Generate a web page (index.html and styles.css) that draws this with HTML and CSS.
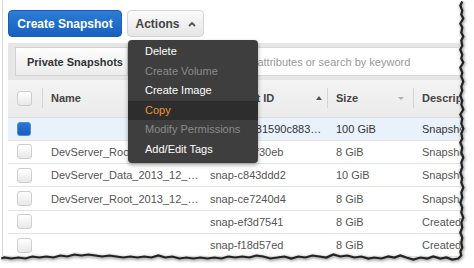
FILE: index.html
```html
<html>
    <head>
        <title>Snapshots</title>
        <link rel="stylesheet" href="styles.css">
    </head>

    <body>
        <div class="screen">
            <div class="toolbar">
                <button class="btn btn-primary">Create Snapshot</button>
                <button class="btn btn-actions">
                    <span>Actions</span>
                    <svg class="caret" width="8" height="6" viewBox="0 0 8 6"><path d="M1 5 L4 2 L7 5" fill="none" stroke="#555" stroke-width="1.8"/></svg>
                </button>
            </div>

            <div class="panel">
                <div class="filter">
                    <div class="filter-type">Private Snapshots</div>
                    <div class="filter-search">
                        <svg class="search-icon" width="12" height="12" viewBox="0 0 12 12"><circle cx="5" cy="5" r="3.5" fill="none" stroke="#999" stroke-width="1.4"/><path d="M7.5 7.5 L11 11" stroke="#999" stroke-width="1.6"/></svg>
                        <span>Filter by tags and attributes or search by keyword</span>
                    </div>
                </div>

                <table class="grid">
                    <colgroup>
                        <col class="w-check">
                        <col class="w-name">
                        <col class="w-id">
                        <col class="w-size">
                        <col class="w-desc">
                    </colgroup>
                    <thead>
                        <tr>
                            <th class="first"><span class="check"></span></th>
                            <th><div class="th-inner"><span>Name</span></div></th>
                            <th><div class="th-inner th-id"><span>Snapshot ID</span><span class="sort-up"></span></div></th>
                            <th><div class="th-inner th-size"><span>Size</span><span class="sort-down"></span></div></th>
                            <th><div class="th-inner"><span>Description</span></div></th>
                        </tr>
                    </thead>
                    <tbody>
                        <tr class="selected">
                            <td><span class="check checked"></span></td>
                            <td class="name"></td>
                            <td class="id">snap-0d331590c883a2b4f</td>
                            <td>100 GiB</td>
                            <td class="desc">Snapshot of DevServer</td>
                        </tr>
                        <tr>
                            <td><span class="check"></span></td>
                            <td class="name">DevServer_Root_2013_12_18</td>
                            <td class="id">snap-d4af30eb</td>
                            <td>8 GiB</td>
                            <td class="desc">Snapshot of DevServer</td>
                        </tr>
                        <tr>
                            <td><span class="check"></span></td>
                            <td class="name">DevServer_Data_2013_12_18</td>
                            <td class="id">snap-c843ddd2</td>
                            <td>10 GiB</td>
                            <td class="desc">Snapshot of DevServer</td>
                        </tr>
                        <tr>
                            <td><span class="check"></span></td>
                            <td class="name">DevServer_Root_2013_12_17</td>
                            <td class="id">snap-ce7240d4</td>
                            <td>8 GiB</td>
                            <td class="desc">Snapshot of DevServer</td>
                        </tr>
                        <tr>
                            <td><span class="check"></span></td>
                            <td class="name"></td>
                            <td class="id">snap-ef3d7541</td>
                            <td>8 GiB</td>
                            <td class="desc">Created by CreateImage</td>
                        </tr>
                        <tr>
                            <td><span class="check"></span></td>
                            <td class="name"></td>
                            <td class="id">snap-f18d57ed</td>
                            <td>8 GiB</td>
                            <td class="desc">Created by CreateImage</td>
                        </tr>
                    </tbody>
                </table>
            </div>
        </div>

        <ul class="menu">
            <li>Delete</li>
            <li class="disabled">Create Volume</li>
            <li>Create Image</li>
            <li class="active">Copy</li>
            <li class="disabled">Modify Permissions</li>
            <li>Add/Edit Tags</li>
        </ul>

        <svg class="tear" width="474" height="268" viewBox="0 0 474 268">
            <defs>
                <filter id="soft" x="-5%" y="-5%" width="110%" height="110%">
                    <feGaussianBlur stdDeviation="0.7"/>
                </filter>
                <filter id="wide" x="-5%" y="-5%" width="110%" height="110%">
                    <feGaussianBlur stdDeviation="1.4"/>
                </filter>
            </defs>
            <path fill="#fff" d="M474,0 L461,0 L459,4 L461,9 L460,13 L462,17 L459,22 L461,26 L460,31 L462,35 L460,39 L461,44 L459,48 L461,53 L460,57 L462,61 L459,66 L461,71 L460,75 L462,80 L460,85 L461,89 L459,94 L461,99 L460,103 L462,108 L459,113 L461,117 L460,122 L462,127 L460,132 L461,137 L459,141 L461,146 L460,151 L462,156 L460,161 L461,166 L459,171 L461,176 L460,181 L462,186 L460,191 L461,196 L459,201 L461,206 L460,211 L462,216 L460,221 L461,226 L459,231 L461,236 L460,241 L461,246 L459,250 L460,254 L457,257 L451,258 L445,256 L439,257 L432,255 L426,257 L419,256 L412,258 L405,256 L399,254 L393,256 L387,255 L380,257 L373,256 L367,257 L360,255 L353,256 L346,254 L339,255 L332,253 L325,256 L318,255 L311,254 L304,256 L297,255 L290,257 L283,255 L276,256 L269,257 L262,255 L255,254 L248,256 L241,255 L234,256 L227,255 L220,257 L213,256 L206,257 L199,256 L192,257 L185,256 L178,257 L171,255 L164,256 L157,254 L150,256 L143,255 L136,256 L129,255 L122,256 L115,255 L108,254 L101,255 L94,254 L87,253 L80,254 L73,253 L66,255 L59,254 L52,256 L45,255 L38,256 L31,255 L24,257 L17,256 L10,257 L3,256 L0,257 L0,268 L474,268 Z"/>
            <path class="tear-glow" filter="url(#wide)" transform="translate(2,2.4)" d="M461,0 L459,4 L461,9 L460,13 L462,17 L459,22 L461,26 L460,31 L462,35 L460,39 L461,44 L459,48 L461,53 L460,57 L462,61 L459,66 L461,71 L460,75 L462,80 L460,85 L461,89 L459,94 L461,99 L460,103 L462,108 L459,113 L461,117 L460,122 L462,127 L460,132 L461,137 L459,141 L461,146 L460,151 L462,156 L460,161 L461,166 L459,171 L461,176 L460,181 L462,186 L460,191 L461,196 L459,201 L461,206 L460,211 L462,216 L460,221 L461,226 L459,231 L461,236 L460,241 L461,246 L459,250 L460,254 L457,257 L451,258 L445,256 L439,257 L432,255 L426,257 L419,256 L412,258 L405,256 L399,254 L393,256 L387,255 L380,257 L373,256 L367,257 L360,255 L353,256 L346,254 L339,255 L332,253 L325,256 L318,255 L311,254 L304,256 L297,255 L290,257 L283,255 L276,256 L269,257 L262,255 L255,254 L248,256 L241,255 L234,256 L227,255 L220,257 L213,256 L206,257 L199,256 L192,257 L185,256 L178,257 L171,255 L164,256 L157,254 L150,256 L143,255 L136,256 L129,255 L122,256 L115,255 L108,254 L101,255 L94,254 L87,253 L80,254 L73,253 L66,255 L59,254 L52,256 L45,255 L38,256 L31,255 L24,257 L17,256 L10,257 L3,256 L0,257"/>
            <path class="tear-shadow" filter="url(#soft)" transform="translate(1.3,1.5)" d="M461,0 L459,4 L461,9 L460,13 L462,17 L459,22 L461,26 L460,31 L462,35 L460,39 L461,44 L459,48 L461,53 L460,57 L462,61 L459,66 L461,71 L460,75 L462,80 L460,85 L461,89 L459,94 L461,99 L460,103 L462,108 L459,113 L461,117 L460,122 L462,127 L460,132 L461,137 L459,141 L461,146 L460,151 L462,156 L460,161 L461,166 L459,171 L461,176 L460,181 L462,186 L460,191 L461,196 L459,201 L461,206 L460,211 L462,216 L460,221 L461,226 L459,231 L461,236 L460,241 L461,246 L459,250 L460,254 L457,257 L451,258 L445,256 L439,257 L432,255 L426,257 L419,256 L412,258 L405,256 L399,254 L393,256 L387,255 L380,257 L373,256 L367,257 L360,255 L353,256 L346,254 L339,255 L332,253 L325,256 L318,255 L311,254 L304,256 L297,255 L290,257 L283,255 L276,256 L269,257 L262,255 L255,254 L248,256 L241,255 L234,256 L227,255 L220,257 L213,256 L206,257 L199,256 L192,257 L185,256 L178,257 L171,255 L164,256 L157,254 L150,256 L143,255 L136,256 L129,255 L122,256 L115,255 L108,254 L101,255 L94,254 L87,253 L80,254 L73,253 L66,255 L59,254 L52,256 L45,255 L38,256 L31,255 L24,257 L17,256 L10,257 L3,256 L0,257"/>
        </svg>
    </body>
</html>
```

FILE: styles.css
```css
* {
    box-sizing: border-box;
}

html, body {
    margin: 0;
    padding: 0;
}

body {
    position: relative;
    width: 474px;
    height: 268px;
    overflow: hidden;
    background: #fff;
    font-family: "Liberation Sans", Arial, sans-serif;
    font-size: 11px;
    color: #555;
}

.screen {
    height: 268px;
    margin-left: 2px;
    padding-left: 5px;
    border-left: 1px solid #d8d8d8;
}

/* top buttons */

.toolbar {
    display: flex;
    gap: 5px;
    height: 43px;
    padding-top: 10px;
}

.btn {
    height: 27px;
    border-radius: 4px;
    font-family: "Liberation Sans", Arial, sans-serif;
    font-size: 12px;
    font-weight: bold;
    padding: 0;
}

.btn-primary {
    width: 114px;
    color: #fff;
    background: linear-gradient(#2b7dd8, #1761bd);
    border: 1px solid #1a5db2;
}

.btn-actions {
    width: 77px;
    color: #444;
    background: linear-gradient(#fbfbfb, #e6e6e6);
    border: 1px solid #d3d3d3;
    display: flex;
    align-items: center;
    justify-content: center;
    gap: 8px;
}

/* grey panel with filter and table */

.panel {
    background: #e6e6e6;
    padding-top: 4px;
}

.filter {
    display: flex;
    height: 29px;
    margin: 0 0 4px 7px;
}

.filter-type {
    width: 113px;
    display: flex;
    align-items: center;
    padding-left: 11px;
    font-weight: bold;
    color: #333;
    background: linear-gradient(#fdfdfd, #ececec);
    border: 1px solid #d2d2d2;
}

.filter-search {
    flex: 1;
    display: flex;
    align-items: center;
    gap: 18px;
    padding-left: 12px;
    color: #9a9a9a;
    white-space: nowrap;
    background: #fff;
    border: 1px solid #d8d8d8;
    border-left: none;
}

.grid {
    width: 466px;
    table-layout: fixed;
    border-collapse: collapse;
    background: #fff;
    font-size: 11px;
    font-family: "Liberation Sans", Arial, sans-serif;
}

.w-check { width: 34px; }
.w-name { width: 159px; }
.w-id { width: 126px; }
.w-size { width: 86px; }
.w-desc { width: 61px; }

.grid th {
    height: 37px;
    padding: 0;
    text-align: left;
    font-size: 11px;
    font-weight: bold;
    color: #444;
    background: linear-gradient(#d4d4d4, #d4d4d4) no-repeat 0 50% / 1px 20px, linear-gradient(#f3f3f3, #ebebeb);
    border-bottom: 1px solid #dcdcdc;
}

.grid th.first {
    padding-left: 9px;
    background: linear-gradient(#f3f3f3, #ebebeb);
}

.th-inner {
    display: flex;
    align-items: center;
    justify-content: space-between;
    padding-left: 9px;
    white-space: nowrap;
    overflow: hidden;
}

.th-id {
    padding-right: 5px;
}

.th-size {
    padding-right: 9px;
}

.sort-up {
    flex: none;
    width: 0;
    height: 0;
    border-left: 3px solid transparent;
    border-right: 3px solid transparent;
    border-bottom: 4px solid #555;
}

.sort-down {
    flex: none;
    width: 0;
    height: 0;
    border-left: 3px solid transparent;
    border-right: 3px solid transparent;
    border-top: 3px solid #b0b0b0;
}

.grid td {
    height: 23.33px;
    padding: 0 0 0 9px;
    font-size: 11px;
    white-space: nowrap;
    overflow: hidden;
    border-bottom: 1px solid #e3e3e3;
}

.grid td.name {
    padding-right: 2px;
    text-overflow: ellipsis;
}

.grid td.id {
    padding-right: 2px;
    text-overflow: ellipsis;
}

.grid tr.selected td {
    background: #e9f1fb;
    color: #333;
}

.check {
    display: inline-block;
    width: 15px;
    height: 15px;
    vertical-align: middle;
    border: 1px solid #cdcdcd;
    border-radius: 3px;
    background: linear-gradient(#fff, #e8e8e8);
}

.check.checked {
    width: 14px;
    height: 14px;
    border-color: #4d8ddb;
    background: linear-gradient(#2a74d2, #1a5fbf);
}

/* actions dropdown */

.menu {
    position: absolute;
    left: 128px;
    top: 40px;
    width: 130px;
    margin: 0;
    padding: 2px 0 3px 0;
    list-style: none;
    background: #3e3e3e;
    border-radius: 4px;
    box-shadow: 0 2px 4px rgba(0, 0, 0, 0.35);
}

.menu li {
    height: 19.6px;
    line-height: 19.6px;
    padding-left: 17px;
    color: #fff;
    white-space: nowrap;
}

.menu li.disabled {
    color: #8a8a8a;
}

.menu li.active {
    color: #ee9534;
    background: #2d2d2d;
}

/* torn paper edge */

.tear {
    position: absolute;
    left: 0;
    top: 0;
    pointer-events: none;
}

.tear-glow {
    fill: none;
    stroke: #999;
    stroke-width: 3;
}

.tear-shadow {
    fill: none;
    stroke: #222;
    stroke-width: 2.2;
}
```
